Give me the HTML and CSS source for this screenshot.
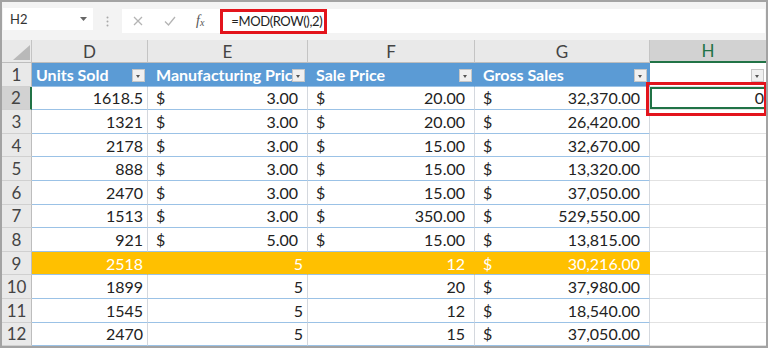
FILE: index.html
```html
<!DOCTYPE html>
<html lang="en">
<head>
  <meta charset="UTF-8">
  <meta name="viewport" content="width=device-width, initial-scale=1.0">
  <title>MOD ROW</title>
  <link rel="stylesheet" href="styles.css">
</head>
<body>
  <div class="frame">
    <div class="toolbar">
      <div class="namebox">
        <span>H2</span>
        <svg class="nb-arrow" width="7" height="4" viewBox="0 0 7 4"><polygon points="0,0 7,0 3.5,4" fill="#666"/></svg>
      </div>
      <svg class="grip" width="3" height="12" viewBox="0 0 3 12">
        <circle cx="1.5" cy="1.5" r="1" fill="#a8a8a8"/>
        <circle cx="1.5" cy="5.5" r="1" fill="#a8a8a8"/>
        <circle cx="1.5" cy="9.5" r="1" fill="#a8a8a8"/>
      </svg>
      <div class="formula">
        <svg class="ficon" width="10" height="10" viewBox="0 0 10 10"><path d="M1 1L9 9M9 1L1 9" stroke="#b4b4b4" stroke-width="1.3" fill="none"/></svg>
        <svg class="ficon" width="12" height="10" viewBox="0 0 12 10"><path d="M1 5.5L4.5 9L11 1" stroke="#b4b4b4" stroke-width="1.3" fill="none"/></svg>
        <span class="fx">f<sub>x</sub></span>
        <span class="ftext">=MOD(ROW(),2)</span>
      </div>
    </div>

    <div class="sheet">
      <div class="row colhead">
        <div class="cell corner">
          <svg width="17" height="15" viewBox="0 0 17 15"><polygon points="17,0 17,15 0,15" fill="#b9b9b9"/></svg>
        </div>
        <div class="cell">D</div>
        <div class="cell">E</div>
        <div class="cell">F</div>
        <div class="cell">G</div>
        <div class="cell sel">H</div>
      </div>

      <div class="row">
        <div class="cell rh">1</div>
        <div class="cell th first">Units Sold<span class="filter"></span></div>
        <div class="cell th">Manufacturing Price<span class="filter"></span></div>
        <div class="cell th">Sale Price<span class="filter"></span></div>
        <div class="cell th">Gross Sales<span class="filter"></span></div>
        <div class="cell hx"><span class="filter"></span></div>
      </div>

      <div class="row">
        <div class="cell rh rsel">2</div>
        <div class="cell num">1618.5</div>
        <div class="cell acc"><span>$</span><span>3.00</span></div>
        <div class="cell acc"><span>$</span><span>20.00</span></div>
        <div class="cell acc"><span>$</span><span>32,370.00</span></div>
        <div class="cell hx active">0</div>
      </div>

      <div class="row">
        <div class="cell rh">3</div>
        <div class="cell num">1321</div>
        <div class="cell acc"><span>$</span><span>3.00</span></div>
        <div class="cell acc"><span>$</span><span>20.00</span></div>
        <div class="cell acc"><span>$</span><span>26,420.00</span></div>
        <div class="cell hx"></div>
      </div>

      <div class="row">
        <div class="cell rh">4</div>
        <div class="cell num">2178</div>
        <div class="cell acc"><span>$</span><span>3.00</span></div>
        <div class="cell acc"><span>$</span><span>15.00</span></div>
        <div class="cell acc"><span>$</span><span>32,670.00</span></div>
        <div class="cell hx"></div>
      </div>

      <div class="row">
        <div class="cell rh">5</div>
        <div class="cell num">888</div>
        <div class="cell acc"><span>$</span><span>3.00</span></div>
        <div class="cell acc"><span>$</span><span>15.00</span></div>
        <div class="cell acc"><span>$</span><span>13,320.00</span></div>
        <div class="cell hx"></div>
      </div>

      <div class="row">
        <div class="cell rh">6</div>
        <div class="cell num">2470</div>
        <div class="cell acc"><span>$</span><span>3.00</span></div>
        <div class="cell acc"><span>$</span><span>15.00</span></div>
        <div class="cell acc"><span>$</span><span>37,050.00</span></div>
        <div class="cell hx"></div>
      </div>

      <div class="row">
        <div class="cell rh">7</div>
        <div class="cell num">1513</div>
        <div class="cell acc"><span>$</span><span>3.00</span></div>
        <div class="cell acc"><span>$</span><span>350.00</span></div>
        <div class="cell acc"><span>$</span><span>529,550.00</span></div>
        <div class="cell hx"></div>
      </div>

      <div class="row">
        <div class="cell rh">8</div>
        <div class="cell num">921</div>
        <div class="cell acc"><span>$</span><span>5.00</span></div>
        <div class="cell acc"><span>$</span><span>15.00</span></div>
        <div class="cell acc"><span>$</span><span>13,815.00</span></div>
        <div class="cell hx"></div>
      </div>

      <div class="row hl">
        <div class="cell rh">9</div>
        <div class="cell num">2518</div>
        <div class="cell num">5</div>
        <div class="cell num gen">12</div>
        <div class="cell acc"><span>$</span><span>30,216.00</span></div>
        <div class="cell hx"></div>
      </div>

      <div class="row">
        <div class="cell rh">10</div>
        <div class="cell num">1899</div>
        <div class="cell num">5</div>
        <div class="cell num gen">20</div>
        <div class="cell acc"><span>$</span><span>37,980.00</span></div>
        <div class="cell hx"></div>
      </div>

      <div class="row">
        <div class="cell rh">11</div>
        <div class="cell num">1545</div>
        <div class="cell num">5</div>
        <div class="cell num gen">12</div>
        <div class="cell acc"><span>$</span><span>18,540.00</span></div>
        <div class="cell hx"></div>
      </div>

      <div class="row">
        <div class="cell rh">12</div>
        <div class="cell num">2470</div>
        <div class="cell num">5</div>
        <div class="cell num gen">15</div>
        <div class="cell acc"><span>$</span><span>37,050.00</span></div>
        <div class="cell hx"></div>
      </div>
    </div>

    <!-- red annotation boxes -->
    <div class="mark mark-formula"></div>
    <div class="mark mark-cell"></div>
  </div>
</body>
</html>
```

FILE: styles.css
```css
body {
  margin: 0;
  font-family: Lato, "Liberation Sans", sans-serif;
  background-color: #ffffff;
}
.frame {
  position: relative;
  width: 768px;
  height: 348px;
  box-sizing: border-box;
  border: 2px solid #a3a3a3;
  background-color: #f3f3f3;
  overflow: hidden;
}

/* formula bar */
.toolbar {
  display: flex;
  align-items: flex-start;
  height: 38px;
  padding-left: 1px;
}
.namebox {
  display: flex;
  align-items: center;
  justify-content: space-between;
  width: 90px;
  height: 22px;
  margin-top: 6px;
  padding: 0 6px 0 7px;
  box-sizing: border-box;
  background-color: #fff;
  font-size: 13px;
  color: #333;
}
.grip {
  margin: 14px 0 0 13px;
}
.formula {
  display: flex;
  align-items: center;
  flex: 1;
  height: 24px;
  margin: 7px 1px 0 13px;
  background-color: #fff;
}
.ficon {
  margin-left: 11px;
}
.ficon + .ficon {
  margin-left: 21px;
}
.fx {
  margin-left: 20px;
  font-family: "Liberation Serif", serif;
  font-style: italic;
  font-size: 14px;
  color: #555;
}
.fx sub {
  font-size: 10px;
  vertical-align: -1px;
}
.ftext {
  margin-left: 27px;
  font-size: 13px;
  letter-spacing: -0.4px;
  color: #222;
}

/* grid */
.sheet {
  background-color: #fff;
}
.row {
  display: grid;
  grid-template-columns: 30px 116px 160px 167px 175px 1fr;
  height: 23.6px;
}
.cell {
  position: relative;
  box-sizing: border-box;
  display: flex;
  align-items: center;
  border-right: 1px solid #d4d8de;
  border-bottom: 1px solid #9bc2e6;
  font-size: 16px;
  color: #222;
  white-space: nowrap;
  overflow: hidden;
}
.colhead {
  height: 23px;
  background-color: #e9e9e9;
}
.colhead .cell {
  justify-content: center;
  border-right: 1px solid #c4c4c4;
  border-bottom: 1px solid #bdbdbd;
  color: #444;
  font-size: 17px;
}
.colhead .corner {
  justify-content: flex-end;
  align-items: flex-end;
  padding: 0 1px 2px 0;
}
.colhead .sel {
  background-color: #d2d2d2;
  color: #217346;
  border-right: none;
  border-bottom: 2px solid #217346;
}
.rh {
  justify-content: center;
  background-color: #e9e9e9;
  border-right: 1px solid #bdbdbd;
  border-bottom: 1px solid #d0d0d0;
  color: #444;
  font-size: 17px;
}
.rsel {
  background-color: #d2d2d2;
  border-right: 2px solid #217346;
}
.th {
  background-color: #5b9bd5;
  border-right-color: #5b9bd5;
  color: #fff;
  font-weight: bold;
  padding-left: 8px;
}
.th.first {
  padding-left: 4px;
}
.filter {
  position: absolute;
  right: 2px;
  bottom: 4px;
  width: 13px;
  height: 13px;
  box-sizing: border-box;
  border: 1px solid #c6c6c6;
  background-color: #f0f0f0;
}
.filter::after {
  content: "";
  position: absolute;
  left: 3px;
  top: 5px;
  border-left: 2.5px solid transparent;
  border-right: 2.5px solid transparent;
  border-top: 3px solid #555;
}
.num {
  justify-content: flex-end;
  padding-right: 4px;
}
.num.gen {
  padding-right: 9px;
}
.acc {
  justify-content: space-between;
  padding: 0 9px 0 8px;
}
.hx {
  justify-content: flex-end;
  padding-right: 2px;
  border-right: none;
  border-bottom: 1px solid #e2e2e2;
}
.active {
  box-shadow: inset 0 0 0 2px #217346;
}
.hl .cell:not(.rh):not(.hx) {
  background-color: #ffc000;
  border-right-color: #ffc000;
  color: #fff;
}

/* annotation boxes */
.mark {
  position: absolute;
  border: 3px solid #e3141c;
}
.mark-formula {
  left: 218px;
  top: 7px;
  width: 107px;
  height: 25px;
  box-sizing: border-box;
}
.mark-cell {
  left: 644px;
  top: 80px;
  width: 121px;
  height: 34px;
  box-sizing: border-box;
}
```
